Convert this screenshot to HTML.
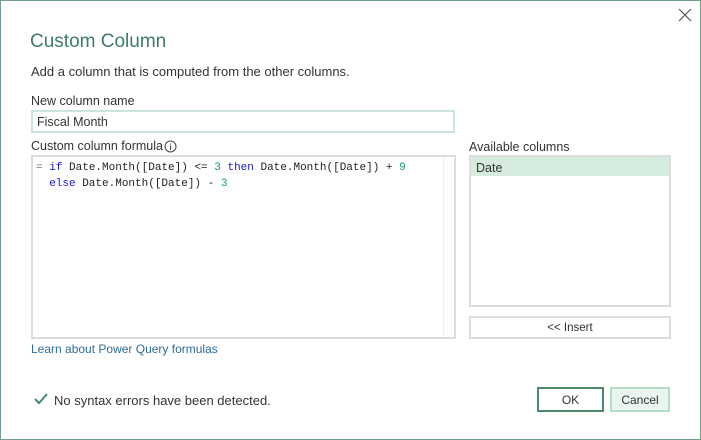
<!DOCTYPE html>
<html><head><style>
body{margin:0;width:701px;height:440px;overflow:hidden;font-family:"Liberation Sans",sans-serif;background:#fff;}
.f{position:absolute;left:0;top:0;width:699px;height:438px;border:1px solid #6f9f86;}
.a{position:absolute;}
.t{color:#333;font-size:12.5px;}
.code{font-family:"Liberation Mono",monospace;font-size:11px;color:#222;}
.k{color:#1a1acc}.n{color:#1a9a6a}
</style></head><body>
<div class="f"></div>
<svg class="a" style="left:678px;top:8px" width="14" height="14"><path d="M1 1L13 13M13 1L1 13" stroke="#555" stroke-width="1.2"/></svg>
<div class="a" style="left:30px;top:31px;font-size:19px;color:#3d7d62;">Custom Column</div>
<div class="a t" style="left:31px;top:64px;font-size:13px;">Add a column that is computed from the other columns.</div>
<div class="a t" style="left:31px;top:94px;">New column name</div>
<div class="a" style="left:31px;top:110px;width:420px;height:19px;border:2px solid #cde5d8;"></div>
<div class="a t" style="left:37px;top:115px;">Fiscal Month</div>
<div class="a t" style="left:31px;top:139px;">Custom column formula</div>
<svg class="a" style="left:164px;top:140px" width="13" height="13"><circle cx="6.5" cy="6.5" r="5.5" fill="none" stroke="#444"/><path d="M6.5 5.5V10M6.5 3.5v1" stroke="#444"/></svg>
<div class="a" style="left:31px;top:155px;width:421px;height:180px;border:2px solid #ddd;"></div>
<div class="a" style="left:443px;top:157px;width:1px;height:180px;background:#eee;"></div>
<div class="a code" style="left:36px;top:160px;line-height:16px;"><span style="color:#777">=</span> <span class="k">if</span> Date.Month([Date]) &lt;= <span class="n">3</span> <span class="k">then</span> Date.Month([Date]) + <span class="n">9</span><br>&nbsp;&nbsp;<span class="k">else</span> Date.Month([Date]) - <span class="n">3</span></div>
<div class="a t" style="left:469px;top:140px;">Available columns</div>
<div class="a" style="left:469px;top:155px;width:198px;height:148px;border:2px solid #ddd;"></div>
<div class="a" style="left:471px;top:157px;width:198px;height:19px;background:#d4ebde;"></div>
<div class="a t" style="left:476px;top:161px;">Date</div>
<div class="a" style="left:469px;top:316px;width:198px;height:19px;border:2px solid #ddd;text-align:center;font-size:11.5px;line-height:20px;color:#333;">&lt;&lt; Insert</div>
<div class="a" style="left:31px;top:342px;font-size:12px;color:#2f6b9a;">Learn about Power Query formulas</div>
<svg class="a" style="left:34px;top:393px" width="14" height="12"><path d="M1 6L5 10L13 1" fill="none" stroke="#3d8a64" stroke-width="2"/></svg>
<div class="a" style="left:54px;top:393px;font-size:13px;color:#333;">No syntax errors have been detected.</div>
<div class="a" style="left:537px;top:387px;width:63px;height:21px;border:2px solid #4d8a6b;text-align:center;line-height:22px;font-size:12px;color:#333;">OK</div>
<div class="a" style="left:610px;top:387px;width:56px;height:21px;border:2px solid #b4dcc7;background:#eaf5ef;text-align:center;line-height:22px;font-size:12px;color:#333;">Cancel</div>
</body></html>
